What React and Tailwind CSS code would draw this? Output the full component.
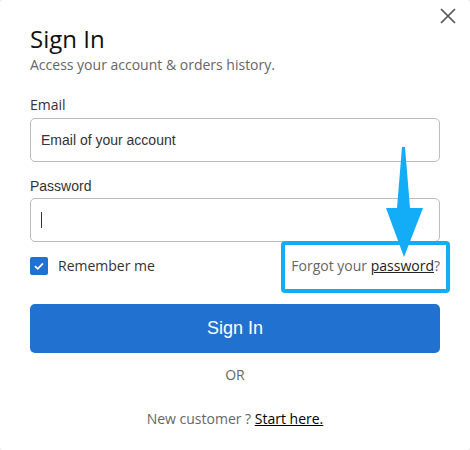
import React from "react";

export default function App() {
  return (
    <div className="w-[470px] h-[450px] bg-[#e6e6e6]">
      <div className="relative w-[470px] h-[450px] bg-white rounded-[3px] px-[30px] pt-[23px] font-['Open_Sans',sans-serif]">
        <button className="absolute left-[440px] top-[8px] w-[16px] h-[16px]" aria-label="Close">
          <svg width="16" height="16" viewBox="0 0 16 16">
            <path d="M1 1 L15 15 M15 1 L1 15" stroke="#555" strokeWidth="1.7" fill="none" />
          </svg>
        </button>

        <h1 className="text-[24px] leading-[32px] text-[#111]">Sign In</h1>
        <p className="text-[14px] leading-[20px] text-[#666]">Access your account &amp; orders history.</p>

        <div className="mt-[20px] mb-[3px] text-[14px] leading-[20px] text-[#333]">Email</div>
        <div className="h-[44px] border border-[#bdbdbd] rounded-[5px] px-[10px] flex items-center font-['Liberation_Sans',sans-serif] text-[14px] text-[#333]">
          Email of your account
        </div>

        <div className="mt-[14px] mb-[2px] font-['Liberation_Sans',sans-serif] text-[14px] leading-[20px] text-[#333]">Password</div>
        <div className="h-[44px] border border-[#bdbdbd] rounded-[5px] px-[10px] flex items-center">
          <span className="block w-px h-[16px] bg-[#333]"></span>
        </div>

        <div className="h-[48px] flex items-center justify-between">
          <div className="flex items-center">
            <span className="w-[18px] h-[18px] rounded-[2px] bg-[#2172d0] flex items-center justify-center">
              <svg width="12" height="12" viewBox="0 0 12 12">
                <path d="M2 6.2 L4.8 8.8 L10 3.4" stroke="#fff" strokeWidth="1.8" fill="none" />
              </svg>
            </span>
            <span className="ml-[10px] text-[14px] leading-[20px] text-[#333]">Remember me</span>
          </div>
          <div className="text-[14px] leading-[20px] text-[#666]">
            Forgot your <span className="text-[#222] underline">password</span>?
          </div>
        </div>

        <button className="mt-[14px] w-full h-[49px] rounded-[5px] bg-[#2172d0] text-white font-['Liberation_Sans',sans-serif] text-[18px]">
          Sign In
        </button>

        <div className="mt-[12px] text-center text-[14px] leading-[20px] text-[#666]">OR</div>
        <div className="mt-[24px] text-center text-[14px] leading-[20px] text-[#666]">
          New customer ? <span className="text-black underline">Start here.</span>
        </div>

        <div className="absolute left-[281px] top-[241px] w-[169px] h-[52px] border-[4px] border-[#12adf6] rounded-[4px] pointer-events-none"></div>
        <svg className="absolute left-0 top-0 pointer-events-none" width="470" height="450" viewBox="0 0 470 450">
          <polygon points="402,147 405,147 410,208 423,208 404,257 386,208 397,208" fill="#12adf6" />
        </svg>
      </div>
    </div>
  );
}
